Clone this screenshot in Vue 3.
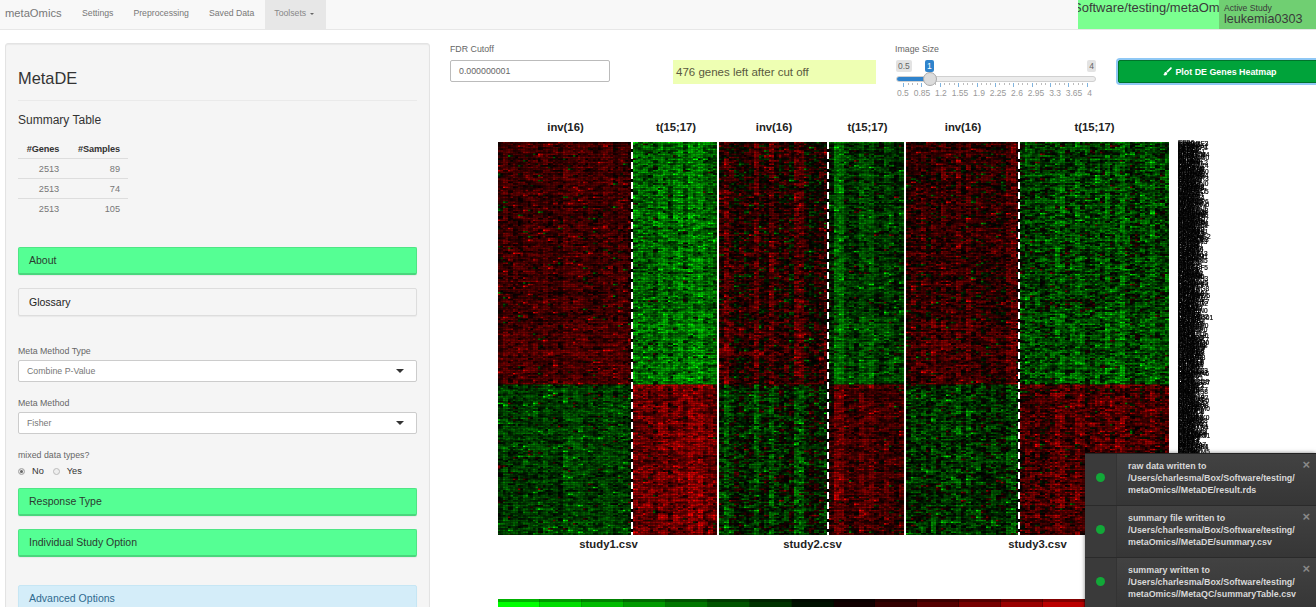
<template>
  <div class="app-root">
    <nav class="navbar">
      <span class="brand">metaOmics</span>
      <a class="nav-link">Settings</a>
      <a class="nav-link">Preprocessing</a>
      <a class="nav-link">Saved Data</a>
      <a class="nav-link nav-link--open">Toolsets <i class="caret caret--small"></i></a>
      <div class="nav-status">
        <div class="working-dir"><span>Software/testing/metaOmics</span></div>
        <div class="active-study">
          <small>Active Study</small>
          <strong>leukemia0303</strong>
        </div>
      </div>
    </nav>

    <div class="page">
      <aside class="well">
        <h3 class="well-title">MetaDE</h3>
        <h4 class="well-sub">Summary Table</h4>
        <table class="summary">
          <thead>
            <tr><th>#Genes</th><th>#Samples</th></tr>
          </thead>
          <tbody>
            <tr v-for="row in summaryRows" :key="row.samples">
              <td>{{ row.genes }}</td>
              <td>{{ row.samples }}</td>
            </tr>
          </tbody>
        </table>

        <div class="panel panel--green panel--about">About</div>
        <div class="panel panel--plain">Glossary</div>

        <label class="field-label field-label--first">Meta Method Type</label>
        <div class="select">Combine P-Value<i class="caret"></i></div>
        <label class="field-label">Meta Method</label>
        <div class="select">Fisher<i class="caret"></i></div>

        <label class="field-label">mixed data types?</label>
        <div class="radios">
          <span class="radio radio--on"></span><span class="radio-text">No</span>
          <span class="radio"></span><span class="radio-text">Yes</span>
        </div>

        <div class="panel panel--green panel--response">Response Type</div>
        <div class="panel panel--green panel--study">Individual Study Option</div>
        <div class="panel panel--blue">Advanced Options</div>
      </aside>

      <main class="main">
        <div class="controls">
          <div class="fdr">
            <label class="field-label field-label--top">FDR Cutoff</label>
            <div class="text-input">0.000000001</div>
          </div>
          <div class="genes-left">476 genes left after cut off</div>
          <div class="slider">
            <label class="field-label field-label--top">Image Size</label>
            <div class="slider-body">
              <span class="slider-tag slider-tag--min">0.5</span>
              <span class="slider-tag slider-tag--value">1</span>
              <span class="slider-tag slider-tag--max">4</span>
              <div class="slider-track"><div class="slider-fill"></div></div>
              <div class="slider-handle"></div>
            </div>
            <div class="slider-ticks">
              <i v-for="n in 41" :key="n" :class="{ major: (n - 1) % 4 === 0 }"></i>
            </div>
            <div class="slider-scale">
              <span v-for="t in sliderScale" :key="t">{{ t }}</span>
            </div>
          </div>
          <button class="plot-btn">
            <svg class="brush" viewBox="0 0 12 12">
              <path d="M11.4.6c-.5-.5-1.300-.3-2 .3L4.300 6c.9.200 1.500.8 1.700 1.700l5.100-5c.6-.7.800-1.600.3-2.100zM3.600 6.800C2.400 6.800 1.800 7.600 1.700 8.600 1.600 9.600 1.100 10.100.3 10.300c1.100 1.100 3 1.300 4.300.3 1-.7 1.200-1.900.9-2.600C5.100 7.200 4.400 6.800 3.600 6.800z" fill="#fff" />
            </svg>
            Plot DE Genes Heatmap
          </button>
        </div>

        <div class="plot">
          <div class="plot-titles">
            <span v-for="(b, i) in blocks" :key="i" :style="{ width: b.width + 'px' }">{{ b.label }}</span>
          </div>
          <div class="plot-body">
            <canvas ref="heatmap" class="heatmap" width="671" height="393"></canvas>
            <svg class="gene-labels" width="60" height="393">
              <text v-for="g in geneLabels" :key="g.id" :x="g.x" :y="g.y">{{ g.name }}</text>
            </svg>
          </div>
          <div class="plot-studies">
            <span v-for="s in studies" :key="s.name" :style="{ width: s.width + 'px' }">{{ s.name }}</span>
          </div>
          <div class="color-key">
            <i v-for="(c, i) in keyColors" :key="i" :style="{ background: c }"></i>
          </div>
        </div>
      </main>
    </div>

    <div class="notifications">
      <div v-for="n in notes" :key="n.title" class="note">
        <div class="note-icon"><span class="note-dot"></span></div>
        <div class="note-text">
          <div>{{ n.title }}</div>
          <div>/Users/charlesma/Box/Software/testing/</div>
          <div>{{ n.path }}</div>
        </div>
        <span class="note-close">×</span>
      </div>
    </div>
  </div>
</template>

<script setup>
import { onMounted, ref } from 'vue';

const summaryRows = [
  { genes: 2513, samples: 89 },
  { genes: 2513, samples: 74 },
  { genes: 2513, samples: 105 },
];

const sliderScale = ['0.5', '0.85', '1.2', '1.55', '1.9', '2.25', '2.6', '2.95', '3.3', '3.65', '4'];

// start/width are pixels inside the heatmap, sign: +1 means red in the upper cluster
const blocks = [
  { label: 'inv(16)', start: 0, width: 135, sign: 1, level: 0.24, spread: 0.08, noise: 0.42 },
  { label: 't(15;17)', start: 135, width: 86, sign: -1, level: 0.46, spread: 0.16, noise: 0.62 },
  { label: 'inv(16)', start: 221, width: 110, sign: 1, level: 0.2, spread: 0.22, noise: 0.7 },
  { label: 't(15;17)', start: 331, width: 77, sign: -1, level: 0.28, spread: 0.16, noise: 0.5 },
  { label: 'inv(16)', start: 408, width: 114, sign: 1, level: 0.22, spread: 0.14, noise: 0.6 },
  { label: 't(15;17)', start: 522, width: 149, sign: -1, level: 0.32, spread: 0.14, noise: 0.72 },
];

const studies = [
  { name: 'study1.csv', width: 221 },
  { name: 'study2.csv', width: 187 },
  { name: 'study3.csv', width: 263 },
];

const notes = [
  { title: 'raw data written to', path: 'metaOmics//MetaDE/result.rds' },
  { title: 'summary file written to', path: 'metaOmics//MetaDE/summary.csv' },
  { title: 'summary written to', path: 'metaOmics//MetaQC/summaryTable.csv' },
];

function rng(seed) {
  let s = seed;
  return () => {
    s = (s * 1664525 + 1013904223) >>> 0;
    return s / 4294967296;
  };
}

const keyColors = Array.from({ length: 16 }, (_, i) => {
  const v = (i - 7.5) / 7.5;
  const c = Math.round(Math.abs(v) * 255);
  return v < 0 ? `rgb(0,${c},0)` : `rgb(${c},0,0)`;
});

const geneLabels = (() => {
  const rand = rng(11);
  const letters = 'ABCDEFGHKLMNPRSTZ';
  const long = { 212: 'LOC105501', 30: 'KIF23', 64: 'CD34A', 80: 'HOXA9' };
  return Array.from({ length: 476 }, (_, i) => {
    let name = '';
    const len = 3 + Math.floor(rand() * 4);
    for (let k = 0; k < len; k++) name += letters[Math.floor(rand() * letters.length)];
    name += Math.floor(rand() * 9);
    return { id: i, x: 0, y: 3 + i * 0.825, name: long[i] || name };
  });
})();

const heatmap = ref(null);

function drawHeatmap(canvas) {
  const ctx = canvas.getContext('2d');
  const rand = rng(2024);
  const W = canvas.width;
  const H = canvas.height;
  const rowH = 1.65;
  const rows = Math.ceil(H / rowH);
  const splitRow = Math.round(242 / rowH);
  const bandRow = Math.round(176 / rowH);
  const rowEffect = Array.from({ length: rows }, () => (rand() - 0.5) * 0.14);

  ctx.fillStyle = '#000';
  ctx.fillRect(0, 0, W, H);

  blocks.forEach((b) => {
    const cols = Math.ceil(b.width / 2.5);
    const colEffect = [];
    for (let c = 0; c < cols; c++) {
      colEffect.push(c % 2 === 1 ? colEffect[c - 1] : (rand() - 0.5) * 2 * b.spread);
    }
    for (let r = 0; r < rows; r++) {
      const upper = r < splitRow;
      const inBand = r >= bandRow && r < splitRow;
      const dir = upper ? b.sign : -b.sign;
      let prev = 0;
      for (let c = 0; c < cols; c++) {
        const level = b.level + (inBand ? 0.05 : 0) + (!upper && dir > 0 ? 0.03 : 0);
        const jitter = (rand() - 0.5) * (rand() < 0.1 ? 1.5 : b.noise);
        // neighbouring samples share some noise, cells read wider than one column
        prev = c % 2 === 1 ? prev * 0.5 + jitter * 0.5 : jitter;
        const v = dir * (level + colEffect[c]) + prev + rowEffect[r];
        const shade = Math.round(Math.min(1, Math.abs(v)) * 255);
        ctx.fillStyle = v > 0 ? `rgb(${shade},0,0)` : `rgb(0,${shade},0)`;
        const x = b.start + c * 2.5;
        ctx.fillRect(x, r * rowH, Math.min(2.5, b.start + b.width - x), rowH);
      }
    }
  });

  // block separators
  ctx.fillStyle = '#fff';
  [220, 407].forEach((x) => ctx.fillRect(x - 1, 0, 2, H));
  [134, 330, 521].forEach((x) => {
    ctx.fillStyle = '#000';
    ctx.fillRect(x - 1, 0, 2, H);
    ctx.fillStyle = '#fff';
    for (let y = 0; y < H; y += 10) ctx.fillRect(x - 1, y, 2, 7);
  });
}

onMounted(() => drawHeatmap(heatmap.value));
</script>

<style>
html,
body {
  margin: 0;
  height: 607px;
  overflow: hidden;
  background: #fff;
}
</style>

<style scoped>
.app-root {
  position: relative;
  width: 1316px;
  height: 607px;
  overflow: hidden;
  font-family: "Liberation Sans", Arial, sans-serif;
  color: #333;
}

.navbar {
  display: flex;
  height: 29px;
  background: #f8f8f8;
  border-bottom: 1px solid #e7e7e7;
  font-size: 8.7px;
  color: #777;
}

.brand {
  width: 57px;
  padding: 0 10px 0 5px;
  font-size: 11.2px;
  line-height: 26px;
}

.nav-link {
  padding: 0 10px;
  line-height: 26px;
}

.nav-link--open {
  background: #e7e7e7;
  color: #888;
  margin-left: 1px;
  padding: 0 9px;
  width: 43px;
}

.caret {
  display: inline-block;
  width: 0;
  height: 0;
  border-top: 4px solid #333;
  border-left: 4px solid transparent;
  border-right: 4px solid transparent;
}

.caret--small {
  margin-left: 1px;
  vertical-align: middle;
  border-top-width: 2.5px;
  border-left-width: 2.5px;
  border-right-width: 2.5px;
  border-top-color: #666;
}

.nav-status {
  display: flex;
  margin-left: auto;
  height: 29px;
  color: #3a3a3a;
}

.working-dir {
  width: 141px;
  overflow: hidden;
  white-space: nowrap;
  background: #7bff90;
  font-size: 13px;
  line-height: 16px;
}

.working-dir span {
  display: block;
  margin-left: -5px;
}

.active-study {
  width: 92px;
  padding-left: 5px;
  background: #70cf72;
  display: flex;
  flex-direction: column;
}

.active-study small {
  margin-top: 4px;
  font-size: 8.6px;
  line-height: 9px;
}

.active-study strong {
  font-weight: 400;
  font-size: 12.6px;
  line-height: 12px;
}

.page {
  display: flex;
  gap: 20px;
  padding: 13px 0 0 5px;
}

.well {
  box-sizing: border-box;
  flex: none;
  width: 425px;
  height: 600px;
  padding: 0 12px;
  background: #f5f5f5;
  border: 1px solid #e3e3e3;
  border-radius: 3px;
  box-shadow: inset 0 1px 1px rgba(0, 0, 0, 0.05);
}

.well-title {
  margin: 0;
  padding: 24px 0 11px;
  font-size: 16.4px;
  line-height: 21px;
  font-weight: 400;
  color: #333;
  border-bottom: 1px solid #eaeaea;
}

.well-sub {
  margin: 12px 0 0;
  font-size: 12px;
  line-height: 15px;
  font-weight: 400;
}

.summary {
  width: 110px;
  margin-top: 11px;
  border-collapse: collapse;
  font-size: 9.2px;
}

.summary th {
  height: 19px;
  padding: 0 8px 0 0;
  text-align: right;
  font-weight: 700;
  border-bottom: 1px solid #ddd;
  letter-spacing: -0.1px;
}

.summary td {
  height: 19px;
  padding: 0 8px 0 0;
  text-align: right;
  color: #777;
  border-top: 1px solid #ddd;
}

.summary tbody tr:first-child td {
  border-top: 0;
}

.panel {
  box-sizing: border-box;
  padding-left: 10px;
  border-radius: 2px;
  font-size: 10.5px;
  color: #2b3a30;
  box-shadow: 0 1px 1px rgba(0, 0, 0, 0.05);
}

.panel--green {
  height: 28px;
  line-height: 25px;
  background: #55ff94;
  border: 1px solid #4fe585;
  border-bottom: 2px solid #4ad67d;
}

.panel--about {
  margin-top: 29px;
}

.panel--plain {
  height: 28px;
  margin-top: 13px;
  line-height: 26px;
  background: #f5f5f5;
  border: 1px solid #ddd;
  color: #222;
}

.panel--response {
  margin-top: 9px;
}

.panel--study {
  margin-top: 13px;
}

.panel--blue {
  height: 40px;
  margin-top: 28px;
  line-height: 25px;
  background: #d4edf9;
  border: 1px solid #c6e6f4;
  color: #2f6a8f;
}

.field-label {
  display: block;
  margin: 16px 0 3px;
  font-size: 8.8px;
  line-height: 11px;
  color: #666;
}

.field-label--first {
  margin-top: 30px;
}

.field-label--top {
  margin: 0 0 5px;
}

.select {
  box-sizing: border-box;
  display: flex;
  align-items: center;
  justify-content: space-between;
  height: 22px;
  padding: 0 12px 0 8px;
  background: #fff;
  border: 1px solid #ccc;
  border-radius: 2px;
  font-size: 8.8px;
  color: #777;
}

.radios {
  display: flex;
  align-items: center;
  height: 16px;
  margin-top: -1px;
}

.radio {
  box-sizing: border-box;
  width: 7px;
  height: 7px;
  border: 1px solid #bbb;
  border-radius: 50%;
  background: #eee;
}

.radio--on {
  background: #666;
  box-shadow: inset 0 0 0 1px #eee;
}

.radio-text {
  margin: 0 9px 0 7px;
  font-size: 9.2px;
  color: #333;
}

.main {
  flex: none;
  width: 866px;
}

.controls {
  display: flex;
  align-items: flex-start;
  height: 62px;
}

.fdr {
  flex: none;
  width: 160px;
}

.text-input {
  box-sizing: border-box;
  height: 22px;
  padding-left: 8px;
  background: #fff;
  border: 1px solid #bbb;
  border-radius: 2px;
  font-size: 8.8px;
  line-height: 20px;
  color: #666;
}

.fdr,
.slider {
  padding-top: 1px;
}

.genes-left {
  flex: none;
  box-sizing: border-box;
  width: 203px;
  height: 24px;
  margin: 17px 0 0 63px;
  padding-left: 3px;
  background: #eeffb3;
  font-size: 11.5px;
  line-height: 24px;
  color: #5a5a40;
}

.slider {
  flex: none;
  width: 201px;
  margin-left: 19px;
}

.slider-body {
  position: relative;
  height: 22px;
}

.slider-tag {
  position: absolute;
  top: 0;
  height: 12px;
  padding: 0 2px;
  background: #e3e3e3;
  border-radius: 2px;
  font-size: 8.5px;
  line-height: 12px;
  color: #666;
}

.slider-tag--min {
  left: 1px;
}

.slider-tag--value {
  left: 30px;
  background: #2f83cc;
  color: #fff;
}

.slider-tag--max {
  right: 0;
}

.slider-track {
  position: absolute;
  top: 16px;
  left: 1px;
  right: 0;
  height: 6px;
  background: #ececec;
  border: 1px solid #d0d0d0;
  border-radius: 3px;
  box-sizing: border-box;
  overflow: hidden;
}

.slider-fill {
  width: 34px;
  height: 100%;
  background: #2f83cc;
}

.slider-handle {
  position: absolute;
  top: 12px;
  left: 28px;
  box-sizing: border-box;
  width: 14px;
  height: 14px;
  background: #dcdcdc;
  border: 1px solid #aaa;
  border-radius: 50%;
}

.slider-ticks {
  display: flex;
  justify-content: space-between;
  height: 4px;
  margin: 1px 8px 0 8px;
}

.slider-ticks i {
  width: 1px;
  height: 2px;
  background: #bbb;
}

.slider-ticks i.major {
  height: 4px;
  background: #7fb3de;
}

.slider-scale {
  display: flex;
  justify-content: space-between;
  margin: 1px 4px 0 2px;
  font-size: 8.5px;
  line-height: 11px;
  color: #999;
}

.plot-btn {
  display: flex;
  flex: none;
  align-items: center;
  justify-content: center;
  gap: 3px;
  width: 204px;
  height: 23px;
  margin: 17px 0 0 22px;
  padding: 0;
  background: #00a33a;
  border: 1px solid #00742a;
  border-radius: 2px;
  box-shadow: 0 0 0 2px #8fc8f5;
  font-family: inherit;
  font-size: 8.9px;
  font-weight: 700;
  color: #fff;
}

.brush {
  width: 9px;
  height: 9px;
}

.plot {
  margin: 15px 0 0 48px;
  width: 730px;
}

.plot-titles,
.plot-studies {
  display: flex;
  font-size: 11.3px;
  font-weight: 700;
  text-align: center;
  color: #222;
}

.plot-titles {
  height: 22px;
  line-height: 15px;
}

.plot-titles span,
.plot-studies span {
  flex: none;
  white-space: nowrap;
}

.plot-body {
  display: flex;
  gap: 9px;
  height: 393px;
}

.heatmap {
  display: block;
  flex: none;
  width: 671px;
  height: 393px;
  filter: blur(0.4px);
}

.gene-labels {
  flex: none;
  overflow: visible;
  filter: grayscale(1);
}

.gene-labels text {
  font-size: 6.5px;
  fill: #000;
  stroke: #000;
  stroke-width: 0.2px;
}

.plot-studies {
  height: 64px;
  padding-top: 2px;
  box-sizing: border-box;
  line-height: 14px;
}

.color-key {
  display: flex;
  width: 671px;
  height: 10px;
}

.color-key i {
  flex: 1;
  box-shadow: inset 0 3px 0 rgba(0, 0, 0, 0.3), inset -1px 0 0 rgba(0, 0, 0, 0.25);
}

.notifications {
  position: absolute;
  top: 453px;
  left: 1085px;
  width: 231px;
  background: #3c3c3c;
  box-shadow: 0 0 4px rgba(0, 0, 0, 0.5);
  border-top: 1px solid #222;
}

.note {
  position: relative;
  display: flex;
  height: 51px;
  border-bottom: 1px solid #2a2a2a;
  background: linear-gradient(#424242, #363636);
}

.note-icon {
  display: flex;
  flex: none;
  align-items: center;
  justify-content: center;
  box-sizing: border-box;
  width: 32px;
  padding-bottom: 4px;
  border-right: 1px solid #333;
  background: #3a3a3a;
}

.note-dot {
  width: 9px;
  height: 9px;
  border-radius: 50%;
  background: #12a838;
}

.note-text {
  margin: 6px 0 0 11px;
  font-size: 8.9px;
  font-weight: 700;
  line-height: 12px;
  color: #d8d8d8;
  white-space: nowrap;
}

.note-close {
  position: absolute;
  top: 4px;
  right: 6px;
  font-size: 13px;
  font-weight: 700;
  line-height: 13px;
  color: #888;
}
</style>
